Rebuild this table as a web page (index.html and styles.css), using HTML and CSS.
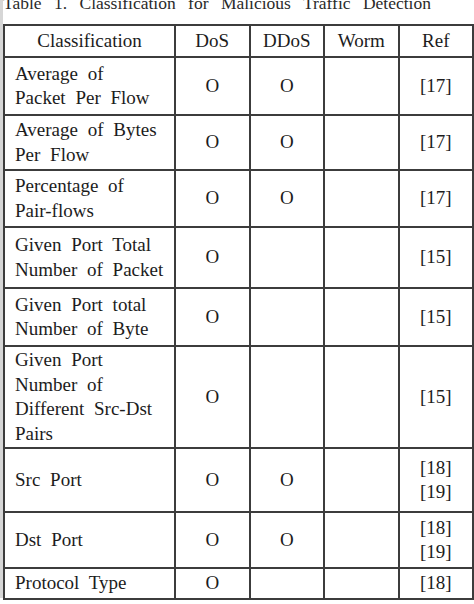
FILE: index.html
```html
<!DOCTYPE html>
<html>
<head>
<meta charset="utf-8">
<link rel="stylesheet" href="styles.css">
</head>
<body>
<div class="page">
  <div class="caption">Table 1. Classification for Malicious Traffic Detection</div>
  <table class="grid">
    <colgroup>
      <col class="c-name"><col class="c-mark"><col class="c-mark"><col class="c-mark"><col class="c-mark">
    </colgroup>
    <tr class="r-head">
      <th>Classification</th><th>DoS</th><th>DDoS</th><th>Worm</th><th>Ref</th>
    </tr>
    <tr class="r-58">
      <td class="name">Average of<br>Packet Per Flow</td><td>O</td><td>O</td><td></td><td>[17]</td>
    </tr>
    <tr class="r-55">
      <td class="name">Average of Bytes<br>Per Flow</td><td>O</td><td>O</td><td></td><td>[17]</td>
    </tr>
    <tr class="r-57">
      <td class="name">Percentage of<br>Pair-flows</td><td>O</td><td>O</td><td></td><td>[17]</td>
    </tr>
    <tr class="r-61">
      <td class="name">Given Port Total<br>Number of Packet</td><td>O</td><td></td><td></td><td>[15]</td>
    </tr>
    <tr class="r-58">
      <td class="name">Given Port total<br>Number of Byte</td><td>O</td><td></td><td></td><td>[15]</td>
    </tr>
    <tr class="r-102">
      <td class="name">Given Port<br>Number of<br>Different Src-Dst<br>Pairs</td><td>O</td><td></td><td></td><td>[15]</td>
    </tr>
    <tr class="r-64">
      <td class="name">Src Port</td><td>O</td><td>O</td><td></td><td>[18]<br>[19]</td>
    </tr>
    <tr class="r-56">
      <td class="name">Dst Port</td><td>O</td><td>O</td><td></td><td>[18]<br>[19]</td>
    </tr>
    <tr class="r-31">
      <td class="name">Protocol Type</td><td>O</td><td></td><td></td><td>[18]</td>
    </tr>
  </table>
</div>
</body>
</html>
```

FILE: styles.css
```css
html, body {
  margin: 0;
  padding: 0;
  background: #ffffff;
}

body {
  width: 474px;
  height: 604px;
  overflow: hidden;
  font-family: "Liberation Serif", "Times New Roman", serif;
  color: #1c1c1c;
}

.page {
  border-left: 3px solid #d6d6d6;
  background: #ffffff;
  height: 604px;
  box-sizing: border-box;
}

.caption {
  font-family: "Liberation Serif", "Times New Roman", serif;
  font-size: 17.5px;
  line-height: 18px;
  height: 18px;
  margin-top: -6px;
  margin-bottom: 12px;
  padding-left: 0;
  word-spacing: 8px;
  letter-spacing: 0;
  white-space: nowrap;
  color: #2a2a2a;
}

.grid {
  border-collapse: collapse;
  table-layout: fixed;
  width: 469px;
  font-family: "Liberation Serif", "Times New Roman", serif;
  font-size: 19px;
  line-height: 24.5px;
  word-spacing: 5px;
}

.c-name { width: 171px; }
.c-mark { width: 74.5px; }

.grid th,
.grid td {
  font-family: "Liberation Serif", "Times New Roman", serif;
  border: 2px solid #3c3c3c;
  padding: 0 4px;
  text-align: center;
  vertical-align: middle;
  font-weight: normal;
}

.grid th {
  word-spacing: 0;
}

.grid td.name {
  text-align: left;
  padding-left: 10px;
  padding-right: 2px;
}

.r-head { height: 32px; }
.r-58 { height: 58px; }
.r-55 { height: 55px; }
.r-57 { height: 57px; }
.r-61 { height: 61px; }
.r-102 { height: 102px; }
.r-64 { height: 64px; }
.r-56 { height: 56px; }
.r-31 { height: 31px; }
```
